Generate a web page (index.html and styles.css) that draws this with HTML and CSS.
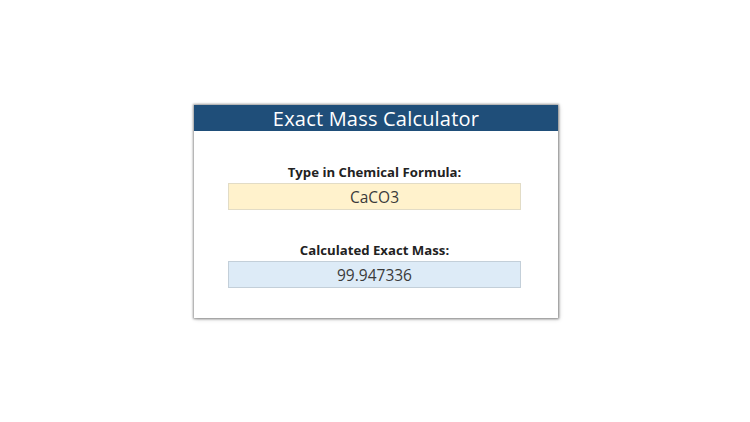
FILE: index.html
```html
<!DOCTYPE html>
<html>
<head>
<meta charset="utf-8">
<link rel="stylesheet" href="styles.css">
</head>
<body>
<div class="page">
  <div class="card">
    <div class="header">Exact Mass Calculator</div>
    <div class="body">
      <div class="label first">Type in Chemical Formula:</div>
      <div class="field input">CaCO3</div>
      <div class="label second">Calculated Exact Mass:</div>
      <div class="field output">99.947336</div>
    </div>
  </div>
</div>
</body>
</html>
```
FILE: styles.css
```css
html, body {
  margin: 0;
  padding: 0;
  background: #ffffff;
}
.page {
  width: 750px;
  height: 422px;
  padding-top: 105px;
  padding-left: 194px;
  box-sizing: border-box;
  font-family: "Open Sans", "Noto Sans", sans-serif;
}
.card {
  width: 364px;
  height: 213px;
  background: #ffffff;
  box-shadow: 0 0 2px 1px rgba(0,0,0,0.35), 1px 1px 4px rgba(0,0,0,0.25);
  display: flex;
  flex-direction: column;
}
.header {
  height: 26px;
  background: #1f4e79;
  color: #ffffff;
  font-size: 20px;
  line-height: 28px;
  text-align: center;
  letter-spacing: 0.2px;
}
.body {
  display: flex;
  flex-direction: column;
  align-items: flex-start;
  padding-left: 34px;
}
.label {
  align-self: stretch;
  width: 293px;
  text-align: center;
  font-size: 13.2px;
  font-weight: 700;
  color: #222222;
  line-height: 16px;
}
.label.first {
  margin-top: 33px;
}
.label.second {
  margin-top: 32px;
}
.field {
  width: 291px;
  height: 25px;
  margin-top: 3px;
  text-align: center;
  font-size: 15.5px;
  line-height: 26px;
  color: #3a3a3a;
}
.input {
  background: #fff2cc;
  border: 1px solid #e2dcc6;
}
.output {
  background: #ddebf7;
  border: 1px solid #c3cfd9;
}
```
